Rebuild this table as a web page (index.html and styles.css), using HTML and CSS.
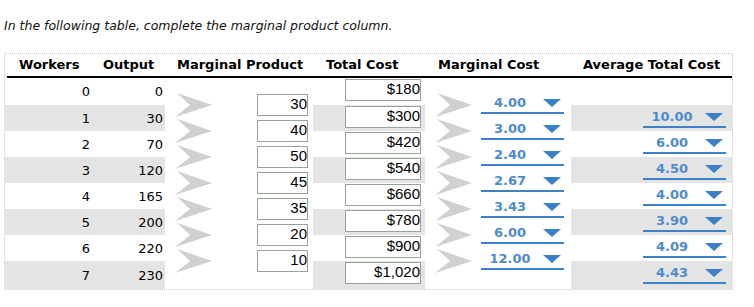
FILE: index.html
```html
<!DOCTYPE html>
<html>
<head>
<meta charset="utf-8">
<link rel="stylesheet" href="styles.css">
</head>
<body>
<div class="page">
  <div class="intro">In the following table, complete the marginal product column.</div>
  <div class="tbl">
    <div class="head">
      <div class="h ha">Workers</div>
      <div class="h hb">Output</div>
      <div class="h hc">Marginal Product</div>
      <div class="h hd">Total Cost</div>
      <div class="h he">Marginal Cost</div>
      <div class="h hf">Average Total Cost</div>
    </div>
    <div class="body">
      <div class="colc">
        <div class="step"><svg class="arr" viewBox="0 0 37 24"><polygon points="2,0 37,12 0,24 15,12"/></svg><div class="box mp">30</div></div>
        <div class="step"><svg class="arr" viewBox="0 0 37 24"><polygon points="2,0 37,12 0,24 15,12"/></svg><div class="box mp">40</div></div>
        <div class="step"><svg class="arr" viewBox="0 0 37 24"><polygon points="2,0 37,12 0,24 15,12"/></svg><div class="box mp">50</div></div>
        <div class="step"><svg class="arr" viewBox="0 0 37 24"><polygon points="2,0 37,12 0,24 15,12"/></svg><div class="box mp">45</div></div>
        <div class="step"><svg class="arr" viewBox="0 0 37 24"><polygon points="2,0 37,12 0,24 15,12"/></svg><div class="box mp">35</div></div>
        <div class="step"><svg class="arr" viewBox="0 0 37 24"><polygon points="2,0 37,12 0,24 15,12"/></svg><div class="box mp">20</div></div>
        <div class="step"><svg class="arr" viewBox="0 0 37 24"><polygon points="2,0 37,12 0,24 15,12"/></svg><div class="box mp">10</div></div>
      </div>
      <div class="cole">
        <div class="step"><svg class="arr" viewBox="0 0 37 24"><polygon points="2,0 37,12 0,24 15,12"/></svg><div class="dd mc"><span class="v">4.00</span><svg class="tri" viewBox="0 0 18 8"><polygon points="0,0 18,0 9,8"/></svg></div></div>
        <div class="step"><svg class="arr" viewBox="0 0 37 24"><polygon points="2,0 37,12 0,24 15,12"/></svg><div class="dd mc"><span class="v">3.00</span><svg class="tri" viewBox="0 0 18 8"><polygon points="0,0 18,0 9,8"/></svg></div></div>
        <div class="step"><svg class="arr" viewBox="0 0 37 24"><polygon points="2,0 37,12 0,24 15,12"/></svg><div class="dd mc"><span class="v">2.40</span><svg class="tri" viewBox="0 0 18 8"><polygon points="0,0 18,0 9,8"/></svg></div></div>
        <div class="step"><svg class="arr" viewBox="0 0 37 24"><polygon points="2,0 37,12 0,24 15,12"/></svg><div class="dd mc"><span class="v">2.67</span><svg class="tri" viewBox="0 0 18 8"><polygon points="0,0 18,0 9,8"/></svg></div></div>
        <div class="step"><svg class="arr" viewBox="0 0 37 24"><polygon points="2,0 37,12 0,24 15,12"/></svg><div class="dd mc"><span class="v">3.43</span><svg class="tri" viewBox="0 0 18 8"><polygon points="0,0 18,0 9,8"/></svg></div></div>
        <div class="step"><svg class="arr" viewBox="0 0 37 24"><polygon points="2,0 37,12 0,24 15,12"/></svg><div class="dd mc"><span class="v">6.00</span><svg class="tri" viewBox="0 0 18 8"><polygon points="0,0 18,0 9,8"/></svg></div></div>
        <div class="step"><svg class="arr" viewBox="0 0 37 24"><polygon points="2,0 37,12 0,24 15,12"/></svg><div class="dd mc"><span class="v">12.00</span><svg class="tri" viewBox="0 0 18 8"><polygon points="0,0 18,0 9,8"/></svg></div></div>
      </div>

      <div class="c ca">0</div><div class="c cb">0</div><div class="c cd"><div class="box tc">$180</div></div><div class="c cf"></div>
      <div class="c ca sh">1</div><div class="c cb sh">30</div><div class="c cd sh"><div class="box tc">$300</div></div><div class="c cf sh"><div class="dd atc"><span class="v">10.00</span><svg class="tri" viewBox="0 0 18 8"><polygon points="0,0 18,0 9,8"/></svg></div></div>
      <div class="c ca">2</div><div class="c cb">70</div><div class="c cd"><div class="box tc">$420</div></div><div class="c cf"><div class="dd atc"><span class="v">6.00</span><svg class="tri" viewBox="0 0 18 8"><polygon points="0,0 18,0 9,8"/></svg></div></div>
      <div class="c ca sh">3</div><div class="c cb sh">120</div><div class="c cd sh"><div class="box tc">$540</div></div><div class="c cf sh"><div class="dd atc"><span class="v">4.50</span><svg class="tri" viewBox="0 0 18 8"><polygon points="0,0 18,0 9,8"/></svg></div></div>
      <div class="c ca">4</div><div class="c cb">165</div><div class="c cd"><div class="box tc">$660</div></div><div class="c cf"><div class="dd atc"><span class="v">4.00</span><svg class="tri" viewBox="0 0 18 8"><polygon points="0,0 18,0 9,8"/></svg></div></div>
      <div class="c ca sh">5</div><div class="c cb sh">200</div><div class="c cd sh"><div class="box tc">$780</div></div><div class="c cf sh"><div class="dd atc"><span class="v">3.90</span><svg class="tri" viewBox="0 0 18 8"><polygon points="0,0 18,0 9,8"/></svg></div></div>
      <div class="c ca">6</div><div class="c cb">220</div><div class="c cd"><div class="box tc">$900</div></div><div class="c cf"><div class="dd atc"><span class="v">4.09</span><svg class="tri" viewBox="0 0 18 8"><polygon points="0,0 18,0 9,8"/></svg></div></div>
      <div class="c ca sh">7</div><div class="c cb sh">230</div><div class="c cd sh"><div class="box tc">$1,020</div></div><div class="c cf sh"><div class="dd atc"><span class="v">4.43</span><svg class="tri" viewBox="0 0 18 8"><polygon points="0,0 18,0 9,8"/></svg></div></div>
    </div>
  </div>
</div>
</body>
</html>
```
FILE: styles.css
```css
html, body { margin: 0; padding: 0; background: #fff; }
body { font-family: "DejaVu Sans", Verdana, sans-serif; font-size: 13px; color: #000; }
.page { padding-left: 4px; width: 729px; }
.intro {
  margin-top: 18px;
  height: 16px;
  line-height: 16px;
  font-style: italic;
  font-size: 12.5px;
  color: #111;
}
.tbl {
  margin-top: 19px;
  border: 1px dotted #c8c8c8;
  width: 729px;
  box-sizing: border-box;
}
.head {
  display: grid;
  grid-template-columns: 90px 68px 148px 112px 146px 162px;
  height: 22px;
  margin-left: 2px;
  border-bottom: 2px solid #000;
  font-weight: bold;
  line-height: 22px;
  font-size: 13px;
}
.h { white-space: nowrap; }
.ha { padding-left: 12px; }
.hb { padding-left: 6px; }
.hc { padding-left: 12px; }
.hd { padding-left: 13px; }
.he { padding-left: 13px; }
.hf { padding-left: 12px; }
.body {
  display: grid;
  grid-template-columns: 92px 68px 148px 112px 146px 162px;
  grid-template-rows: 27px repeat(6, 26px) 28px;
}
.c { display: flex; align-items: center; white-space: nowrap; }
.ca { grid-column: 1; justify-content: flex-end; padding-right: 7px; }
.cb { grid-column: 2; justify-content: flex-end; padding-right: 2px; }
.cd { grid-column: 4; align-items: flex-start; }
.cf { grid-column: 6; align-items: flex-start; }
.sh { background: #e4e4e4; }
.colc { grid-column: 3; grid-row: 1 / -1; padding-top: 14px; }
.cole { grid-column: 5; grid-row: 1 / -1; padding-top: 14px; }
.step { height: 26px; display: flex; align-items: center; }
.arr { width: 37px; height: 24px; margin-left: 10px; fill: #d0d0d0; display: block; flex: none; }
.box {
  box-sizing: border-box;
  height: 22px;
  border: 1px solid #97a597;
  background: #fff;
  font-family: "Liberation Sans", Arial, sans-serif;
  font-size: 15px;
  line-height: 18px;
  text-align: right;
  padding-right: 0;
}
.mp { width: 51px; margin-left: auto; margin-right: 5px; margin-top: -1px; }
.tc { width: 76px; margin-left: 32px; margin-top: 1px; }
.dd {
  box-sizing: border-box;
  width: 83px;
  height: 22px;
  border-bottom: 2px solid #3f80c6;
  padding-top: 2px;
  display: flex;
  align-items: flex-start;
  color: #4f8ad0;
  font-weight: bold;
  font-size: 13px;
  line-height: 18px;
}
.dd .v { flex: 1; text-align: center; padding-right: 4px; }
.tri { width: 18px; height: 8px; fill: #3d7fc6; margin-top: 5px; margin-right: 3px; display: block; flex: none; }
.mc { margin-left: 9px; align-self: flex-start; }
.atc { margin-left: 72px; margin-top: 1px; }
```
